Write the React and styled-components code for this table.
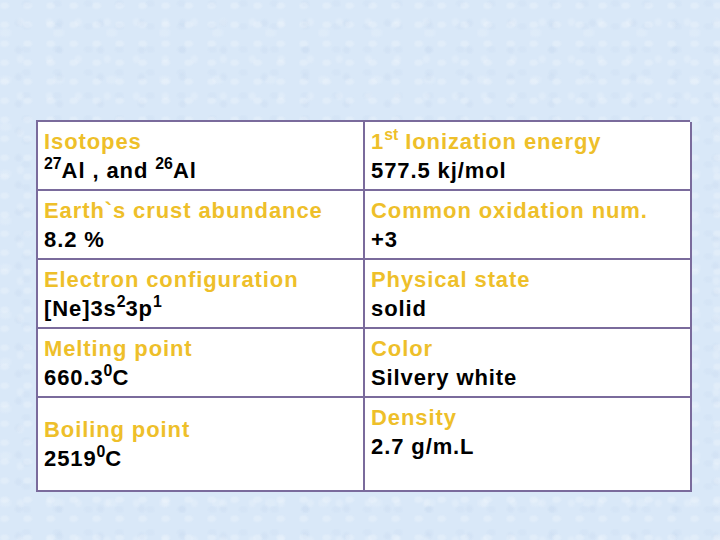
import React from "react";
import styled, { createGlobalStyle } from "styled-components";

const Global = createGlobalStyle`
  html, body { margin: 0; padding: 0; }
  body {
    width: 720px;
    height: 540px;
    overflow: hidden;
    font-family: "Liberation Sans", Arial, sans-serif;
  }
`;

// light blue paper texture, approximated with a few faint offset speckle layers
const Slide = styled.div`
  width: 720px;
  height: 540px;
  box-sizing: border-box;
  padding: 120px 30px 0 36px;
  background-color: #d9e8f8;
  background-image:
    radial-gradient(ellipse at 20% 30%, rgba(255,255,255,0.2) 0 3px, transparent 6px),
    radial-gradient(ellipse at 70% 60%, rgba(255,255,255,0.16) 0 2px, transparent 5px),
    radial-gradient(ellipse at 45% 85%, rgba(185,205,232,0.18) 0 2px, transparent 5px),
    radial-gradient(ellipse at 85% 15%, rgba(195,214,238,0.18) 0 3px, transparent 6px),
    radial-gradient(ellipse at 10% 70%, rgba(240,246,253,0.2) 0 4px, transparent 8px);
  background-size: 23px 19px, 29px 37px, 41px 27px, 31px 23px, 53px 47px;
`;

const Table = styled.div`
  width: 654px;
  display: grid;
  grid-template-columns: 327px 327px;
  grid-template-rows: 69px 69px 69px 69px 94px;
  border-top: 2px solid #7a6b9c;
  border-left: 2px solid #7a6b9c;
  background: #fff;
  box-sizing: border-box;
`;

const Cell = styled.div`
  box-sizing: border-box;
  border-right: 2px solid #7a6b9c;
  border-bottom: 2px solid #7a6b9c;
  padding: ${(p) => (p.$middle ? "0 6px" : "5px 6px 0")};
  display: flex;
  flex-direction: column;
  justify-content: ${(p) => (p.$middle ? "center" : "flex-start")};
  font-weight: bold;
  font-size: 22px;
  line-height: 29px;
  letter-spacing: 0.9px;
  white-space: nowrap;
`;

const Label = styled.div`
  color: #eebf2a;
`;

const Value = styled.div`
  color: #000;
`;

const Sup = styled.sup`
  font-size: 0.72em;
  line-height: 0;
  vertical-align: 0.6em;
  letter-spacing: 0;
`;

const rows = [
  [
    { label: "Isotopes", value: <><Sup>27</Sup>Al , and <Sup>26</Sup>Al</> },
    { label: <>1<Sup>st</Sup> Ionization energy</>, value: "577.5 kj/mol" },
  ],
  [
    { label: "Earth`s crust abundance", value: "8.2 %" },
    { label: "Common oxidation num.", value: "+3" },
  ],
  [
    { label: "Electron configuration", value: <>[Ne]3s<Sup>2</Sup>3p<Sup>1</Sup></> },
    { label: "Physical state", value: "solid" },
  ],
  [
    { label: "Melting point", value: <>660.3<Sup>0</Sup>C</> },
    { label: "Color", value: "Silvery white" },
  ],
  [
    { label: "Boiling point", value: <>2519<Sup>0</Sup>C</>, middle: true },
    { label: "Density", value: "2.7 g/m.L" },
  ],
];

export default function App() {
  return (
    <>
      <Global />
      <Slide>
        <Table>
          {rows.map((row, i) =>
            row.map((c, j) => (
              <Cell key={`${i}-${j}`} $middle={c.middle}>
                <Label>{c.label}</Label>
                <Value>{c.value}</Value>
              </Cell>
            ))
          )}
        </Table>
      </Slide>
    </>
  );
}
